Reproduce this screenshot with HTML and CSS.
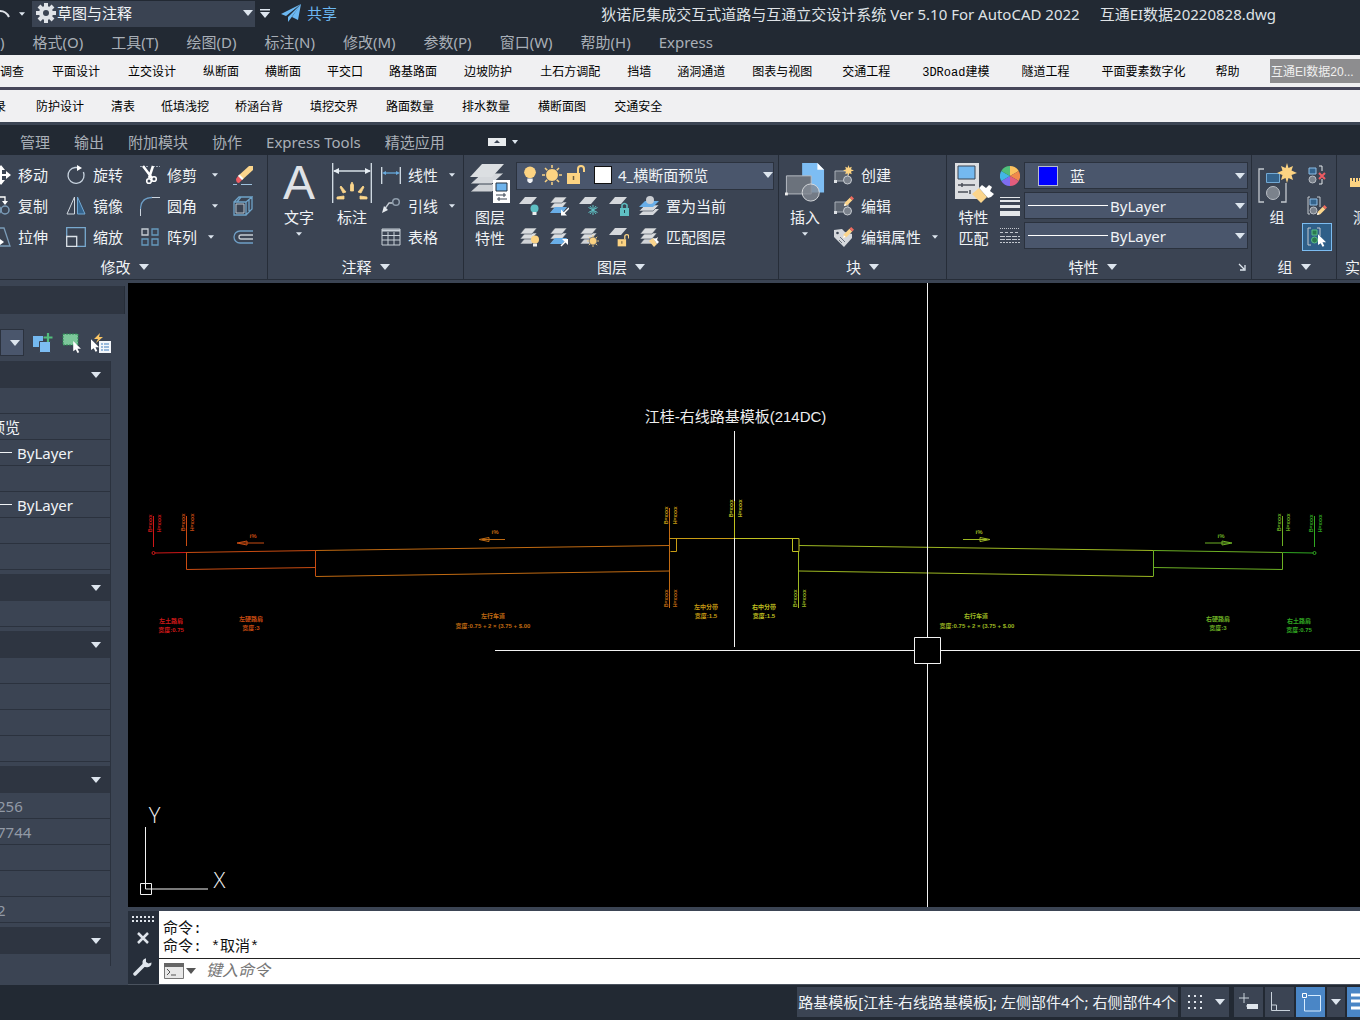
FILE: index.html
```html
<!DOCTYPE html>
<html lang="zh-CN">
<head>
  <meta charset="UTF-8" />
  <meta name="viewport" content="width=device-width, initial-scale=1.0" />
  <title>互通EI数据20220828.dwg</title>
  <link rel="stylesheet" href="styles.css">
</head>
<body>
  <!-- icon sprite -->
  <svg class="sprite" aria-hidden="true">
    <symbol id="caret" viewBox="0 0 10 6"><path d="M0 0h10L5 6z" fill="#dde5ee"/></symbol>
    <symbol id="gear" viewBox="0 0 20 20"><g stroke="#dfe3e8" stroke-width="4"><path d="M10 0v20M0 10h20M3 3l14 14M17 3L3 17"/></g><circle cx="10" cy="10" r="7" fill="#dfe3e8"/><circle cx="10" cy="10" r="3" fill="#3b4453"/></symbol>
    <symbol id="plane" viewBox="0 0 20 20"><path d="M20 1L0 11l5 2zM20 1L7 14v5l3-4zM20 1l-9 13 6 3z" fill="#6cb8f2"/></symbol>
    <symbol id="move" viewBox="0 0 20 20"><path d="M10 1v18M1 10h18" stroke="#fff" stroke-width="2"/><path d="M10 0l4 5H6zM10 20l4-5H6zM0 10l5-4v8zM20 10l-5-4v8z" fill="#fff"/></symbol>
    <symbol id="rotate" viewBox="0 0 20 20"><path d="M12 2.500H9A8 8 0 1 0 18 10c0-1-.3-2-.6-3" fill="none" stroke="#c7d2de" stroke-width="1.300"/><path d="M11 0l5 3-5 3z" fill="#fff"/></symbol>
    <symbol id="trim" viewBox="0 0 20 20"><path d="M0 1.500h8M13 1.500h7" stroke="#9ba5b3" stroke-dasharray="2 1"/><path d="M3 1l9 12M13 1l-4 12" stroke="#fff" stroke-width="2.500"/><g fill="none" stroke="#fff" stroke-width="1.600"><circle cx="9" cy="16" r="2.300"/><circle cx="14" cy="14" r="2.300"/></g></symbol>
    <symbol id="eraser" viewBox="0 0 20 20"><path d="M5 11L16 1h4v4L9 15z" fill="#fbd58c"/><path d="M5 11l4 4-3 3q-3 0-3-4z" fill="#ef5b62"/><path d="M5 11l4 4 1.500-1.500-4-4z" fill="#fff"/><path d="M0 19.500h4M8 19.500h11" stroke="#9fc2de"/></symbol>
    <symbol id="copy" viewBox="0 0 20 20"><path d="M8 1h6v5" fill="none" stroke="#fff" stroke-width="1.300"/><path d="M11 5h6l-3 4z" fill="#fff"/><g fill="none" stroke="#7b9cb8" stroke-width="1.500"><circle cx="6" cy="14" r="4"/><circle cx="14" cy="14" r="4"/></g></symbol>
    <symbol id="mirror" viewBox="0 0 20 20"><path d="M8.500 1v17H1z" fill="none" stroke="#d2d9e1"/><path d="M11.500 1v17H19z" fill="#34638c" stroke="#72a9d4"/></symbol>
    <symbol id="fillet" viewBox="0 0 20 20"><path d="M.5 20v-7" stroke="#cdd5de"/><path d="M.5 13Q1 1.500 12 1.500" fill="none" stroke="#6d9ec6" stroke-width="1.300"/><path d="M12 1.500h8" stroke="#cdd5de"/></symbol>
    <symbol id="cube" viewBox="0 0 20 20"><path d="M1 6h12v13H1zM1 6l5-5h13l-6 5M19 1v12l-6 6M4 6l4-5M16 4v11" fill="none" stroke="#6fa3c8" stroke-width="1.300"/><path d="M3 8h8v9H3z" fill="none" stroke="#b9c4ce"/></symbol>
    <symbol id="stretch" viewBox="0 0 20 20"><path d="M3 1h10l6 18H1z" fill="none" stroke="#7b9cb8" stroke-width="1.300"/><path d="M2 15h8" stroke="#fff"/><path d="M9 12l4 3-4 3z" fill="#fff"/></symbol>
    <symbol id="scale" viewBox="0 0 20 20"><path d="M.7 9V.7h18.600v18.600H11" fill="none" stroke="#78a9cf" stroke-width="1.300"/><path d="M.7 9.500h10v9.800H.7z" fill="none" stroke="#dbe1e8" stroke-width="1.300"/></symbol>
    <symbol id="array" viewBox="0 0 20 20"><path d="M2 2h6v6H2z" fill="none" stroke="#c5ccd4" stroke-width="1.300"/><path d="M12 2h6v6h-6zM2 12h6v6H2zM12 12h6v6h-6z" fill="none" stroke="#6699bd" stroke-width="1.300"/></symbol>
    <symbol id="offset" viewBox="0 0 20 20"><path d="M20 4H7a6 6 0 0 0 0 12h13" fill="none" stroke="#6f9fc6" stroke-width="1.300"/><path d="M20 8H8a2 2 0 0 0 0 4h12" fill="none" stroke="#c5ccd4" stroke-width="1.300"/></symbol>
    <symbol id="dim" viewBox="0 0 40 40"><path d="M.7 0v40M39.300 0v40M2 8h36" stroke="#d7e0e8" stroke-width="1.300"/><path d="M1 8l6-3v6zM39 8l-6-3v6z" fill="#e6edf3"/><path d="M18.500 28V22l1.500-3 1.500 3v6zM14 29l-5-6-1 1 3 6zM26 29l5-6 1 1-3 6zM12 33l-7 1v2h7zM28 33l7 1v2h-7z" fill="#fbd58c" stroke="#fbd58c" stroke-width=".8"/></symbol>
    <symbol id="linear" viewBox="0 0 20 20"><path d="M.7 2v17M19.300 2v17" stroke="#d7e0e8" stroke-width="1.300"/><path d="M3 8h14" stroke="#67a9dc" stroke-width="1.300"/><path d="M1 8l4-2v4zM19 8l-4-2v4z" fill="#67a9dc"/></symbol>
    <symbol id="leader" viewBox="0 0 20 20"><path d="M3 14l5-7h4" fill="none" stroke="#c4cbd3" stroke-width="1.300"/><path d="M1 17l2-7 4 4z" fill="#e5eaef"/><circle cx="15" cy="6" r="3.300" fill="none" stroke="#8f9dac" stroke-width="1.500"/></symbol>
    <symbol id="table" viewBox="0 0 20 20"><path d="M1 2h18v16H1z" fill="none" stroke="#c8d0d8"/><path d="M1 3.500h18" stroke="#c8d0d8" stroke-width="2"/><path d="M1 8.500h18M1 13h18M7 5v13M13 5v13" stroke="#c8d0d8"/></symbol>
    <symbol id="sheet" viewBox="0 0 20 12"><path d="M7 1h12l-6 7H1z" fill="#d5d8dc"/></symbol>
    <symbol id="stack" viewBox="0 0 20 18"><path d="M6 11h12l-5 6H1z" fill="#cfd2d6" stroke="#3b4453" stroke-width=".6"/><path d="M6 6h12l-5 6H1z" fill="#d9dcdf" stroke="#3b4453" stroke-width=".6"/><path d="M6 1h12l-5 6H1z" fill="#d9dcdf" stroke="#3b4453" stroke-width=".6"/></symbol>
    <symbol id="bulb" viewBox="0 0 14 20"><circle cx="7" cy="7" r="6.500" fill="#fcd382"/><path d="M4 14h6v3l-2 2H6l-2-2z" fill="#f1f3f5"/></symbol>
    <symbol id="sun" viewBox="0 0 20 20"><path d="M10 0v20M0 10h20M3 3l14 14M17 3L3 17" stroke="#fcd382" stroke-width="1.500"/><circle cx="10" cy="10" r="6.500" fill="#fcd382" stroke="#43506a"/></symbol>
    <symbol id="unlock" viewBox="0 0 20 20"><path d="M1 8h13v11H1z" fill="#fcd382"/><path d="M12 8V4a3 3 0 0 1 6 0v3" fill="none" stroke="#fcd382" stroke-width="2"/><path d="M7.500 11v4" stroke="#6e5f40" stroke-width="1.500"/></symbol>
    <symbol id="layerProps" viewBox="0 0 40 40"><path d="M12 18h22L22 29H0z" fill="#cfd2d6" stroke="#3b4453"/><path d="M12 10h22L22 21H0z" fill="#d5d8dc" stroke="#3b4453"/><path d="M12 1h22L22 14H0z" fill="#dcdfe2"/><path d="M23 17h17v23H23z" fill="#fff"/><path d="M26 20h11v8H26z" fill="#6fb4ec" stroke="#24303e"/><path d="M26 32h10M27 36h10M34 30v4M29 34v4" stroke="#3b4453"/></symbol>
    <symbol id="layOff" viewBox="0 0 20 20"><use href="#sheet" width="20" height="12" x="-1"/><circle cx="15.500" cy="12.500" r="4" fill="#5fc0c4"/><path d="M13.500 16h4v3h-4z" fill="#eee"/></symbol>
    <symbol id="layPrev" viewBox="0 0 20 20"><use href="#stack" width="20" height="18"/><path d="M6 11h12l-5 6H1z" fill="#69aee8"/><path d="M20 12l-6 6" stroke="#fff" stroke-width="1.500"/><path d="M12 19.500v-6l6 6z" fill="#fff"/></symbol>
    <symbol id="layFreeze" viewBox="0 0 20 20"><use href="#sheet" width="20" height="12" x="-1"/><path d="M14 9v10M9.500 11.500l9 5M18.500 11.500l-9 5M11 10l6 8M17 10l-6 8" stroke="#5fc0c4"/></symbol>
    <symbol id="layLock" viewBox="0 0 20 20"><use href="#sheet" width="20" height="12" x="-1"/><path d="M11 12h9v8h-9z" fill="#5fc0c4"/><path d="M13 12V9q2.500-3 5 0v3" fill="none" stroke="#5fc0c4" stroke-width="1.500"/><path d="M15.500 14v3" stroke="#24424a"/></symbol>
    <symbol id="layCur" viewBox="0 0 20 20"><path d="M6 13h14l-6 6H0z" fill="#d5d8dc"/><path d="M6 9h14l-6 6H0z" fill="#d5d8dc" stroke="#3b4453" stroke-width=".6"/><path d="M6 5h14l-6 6H0z" fill="#69aee8"/><circle cx="11" cy="4" r="4" fill="#c9cdd2"/></symbol>
    <symbol id="layOn" viewBox="0 0 20 20"><use href="#stack" width="20" height="18"/><circle cx="16" cy="12.500" r="4" fill="#fcd382"/><path d="M14 16.500h4v3h-4z" fill="#eee"/></symbol>
    <symbol id="layNext" viewBox="0 0 20 20"><use href="#stack" width="20" height="18"/><path d="M6 11h12l-5 6H1z" fill="#69aee8"/><path d="M12 19l6-6" stroke="#fff" stroke-width="1.500"/><path d="M13 12h6v6z" fill="#fff"/></symbol>
    <symbol id="layThaw" viewBox="0 0 20 20"><use href="#stack" width="20" height="18"/><use href="#sun" x="8" y="8" width="12" height="12"/></symbol>
    <symbol id="layUnlock" viewBox="0 0 20 20"><use href="#sheet" width="20" height="12" x="-1"/><use href="#unlock" x="8" y="7" width="13" height="13"/></symbol>
    <symbol id="layMatch" viewBox="0 0 20 20"><use href="#stack" width="20" height="18"/><path d="M10 14l4-3 4 6-3 3z" fill="#fbd58c"/><path d="M14 11l2 1 3-2-1 3 2 2-2 2z" fill="#fff"/></symbol>
    <symbol id="insert" viewBox="0 0 42 42"><path d="M18 0h16l7 7v24H18z" fill="#7dbdf3"/><path d="M34 0v7h7z" fill="#fff"/><path d="M1.500 13.500h26v19h-26z" fill="#6b727c" stroke="#b9bec5"/><circle cx="27" cy="31" r="9" fill="#838a93" fill-opacity=".8" stroke="#d7dadd"/><path d="M0 31h3v3H0z" fill="#eee"/></symbol>
    <symbol id="blk" viewBox="0 0 20 20"><path d="M1 6h13v10H1z" fill="#5d6570" stroke="#aab0b8"/><circle cx="13.500" cy="15" r="4" fill="#7b828c" stroke="#c5cad0"/><path d="M0 15h3v3H0z" fill="#dde1e5"/></symbol>
    <symbol id="star" viewBox="0 0 20 20"><path d="M10 0l1.500 5L16 3l-1.500 4.500L20 10l-5.500 2L16 17l-4.500-2L10 20l-1.500-5L4 17l1.500-5L0 10l5.500-2.500L4 3l4.500 2z" fill="#fcd382"/></symbol>
    <symbol id="pencil" viewBox="0 0 12 12"><path d="M0 12l1-4 6-6 3 3-6 6z" fill="#fbd58c"/><path d="M7 2l2-2 3 3-2 2z" fill="#ef6b5e"/><path d="M0 12l1-3 2 2z" fill="#fff"/></symbol>
    <symbol id="create" viewBox="0 0 20 20"><use href="#blk" width="20" height="20"/><use href="#star" x="9" y="0" width="11" height="11"/></symbol>
    <symbol id="edit" viewBox="0 0 20 20"><use href="#blk" width="20" height="20"/><use href="#pencil" x="10" y="0" width="10" height="10"/></symbol>
    <symbol id="attr" viewBox="0 0 20 20"><path d="M0 3l8-1 3 3 7 2v4l-8 9L0 10z" fill="#d5d8dc"/><circle cx="3.500" cy="6" r="1.300" fill="#3b4453"/><path d="M6 10l5 5M5 13l3 3" stroke="#6b727c"/><use href="#pencil" x="9" y="0" width="11" height="11"/></symbol>
    <symbol id="match" viewBox="0 0 40 40"><path d="M1 0h24v36H1z" fill="#dcdee1"/><path d="M4 3h17v13H4z" fill="#74b9f0" stroke="#3b4453"/><path d="M4 22h17M4 29h10M8 20v4M16 27v4" stroke="#4a4f58" stroke-width="1.500"/><path d="M18 31l7-6 8 9-6 6z" fill="#fbd58c"/><path d="M25 25l3-3 4 3 3-3 3 2-2 4 4 3-3 3-3 1z" fill="#fff"/></symbol>
    <symbol id="wheel" viewBox="0 0 20 20"><path d="M10 10V0a10 10 0 0 1 8.700 5z" fill="#fbc15e"/><path d="M10 10l8.700-5a10 10 0 0 1 0 10z" fill="#f08a4b"/><path d="M10 10l8.700 5A10 10 0 0 1 10 20z" fill="#e35d7d"/><path d="M10 10v10a10 10 0 0 1-8.700-5z" fill="#7e6df0"/><path d="M10 10l-8.700 5a10 10 0 0 1 0-10z" fill="#42b6e6"/><path d="M10 10L1.300 5A10 10 0 0 1 10 0z" fill="#4fbf7a"/></symbol>
    <symbol id="weight" viewBox="0 0 20 20"><path d="M0 1h20v1H0zM0 4h20v2H0zM0 9h20v3H0zM0 15h20v5H0z" fill="#e3e6e9"/></symbol>
    <symbol id="ltype" viewBox="0 0 20 20"><path d="M0 2.500h20" stroke="#c3c8cf" stroke-dasharray="1 1"/><path d="M0 6.500h20" stroke="#c3c8cf" stroke-dasharray="3 2"/><path d="M0 10.500h20M0 13.500h20" stroke="#c3c8cf" stroke-dasharray="5 1"/><path d="M0 16.500h20" stroke="#c3c8cf" stroke-dasharray="2 1"/></symbol>
    <symbol id="group" viewBox="0 0 40 40"><path d="M7 6H2v33h5M24 39h5V20" fill="none" stroke="#c4c9cf" stroke-width="1.300"/><path d="M9.500 10.500h13v9h-13z" fill="#34638c" stroke="#72a9d4"/><circle cx="16" cy="30" r="6.500" fill="#7b828c" stroke="#b9bec5"/><use href="#star" x="20" y="0" width="20" height="20"/></symbol>
    <symbol id="gobj" viewBox="0 0 20 20"><path d="M4 3h7v6H4z" fill="#34638c" stroke="#8cbde6"/><circle cx="7.500" cy="14.500" r="3.500" fill="#7b828c" stroke="#b9bec5"/></symbol>
    <symbol id="ungroup" viewBox="0 0 20 20"><use href="#gobj" width="20" height="20" x="-2"/><path d="M12 1h3v5M15 14v5h-3" fill="none" stroke="#e4e8ec"/><path d="M12 8l6 6M18 8l-6 6" stroke="#ef5b62" stroke-width="2"/></symbol>
    <symbol id="gedit" viewBox="0 0 20 20"><use href="#gobj" width="20" height="20" x="-1"/><path d="M3 1H1v17h2M10 1h3v10" fill="none" stroke="#c4c9cf"/><use href="#pencil" x="10" y="9" width="10" height="10"/></symbol>
    <symbol id="arrow" viewBox="0 0 10 14"><path d="M0 0v12l3-2 2 4 2-1-2-4h4z" fill="#fff"/></symbol>
    <symbol id="gsel" viewBox="0 0 20 20"><path d="M4 1H1v17h3M10 1h3v8" fill="none" stroke="#c4c9cf"/><path d="M5 3h5v5H5z" fill="#2b7a50" stroke="#58bf85"/><circle cx="7.500" cy="13" r="3" fill="#2b7a50" stroke="#58bf85"/><use href="#arrow" x="11" y="7" width="9" height="13"/></symbol>
    <symbol id="ruler" viewBox="0 0 40 40"><path d="M0 15h40v9H0z" fill="#fcd382"/><path d="M2.500 15v3M5.500 15v4M8.500 15v3" stroke="#3b4453"/></symbol>
    <symbol id="pickAdd" viewBox="0 0 20 20"><path d="M0 3h10v11H0z" fill="#74b9f0"/><path d="M6.500 8.500h11v11h-11z" fill="#7dbdf3" stroke="#3b4453"/><path d="M15 0v9M10.500 4.500h9" stroke="#52bd7c" stroke-width="2.200"/></symbol>
    <symbol id="selObj" viewBox="0 0 20 20"><path d="M1 1h15v11H1z" fill="#7cc79a" stroke="#2d8a55" stroke-dasharray="2 1"/><use href="#arrow" x="11" y="8" width="9" height="12"/></symbol>
    <symbol id="quick" viewBox="0 0 20 20"><path d="M9 0L3 6h4l-2 4 7-6H8z" fill="#fcc765"/><use href="#arrow" x="0" y="6" width="9" height="13"/><path d="M8 8h12v12H8z" fill="#f3f6fa"/><path d="M10 11h2M10 14h2M10 17h2M13 11h5M13 14h5M13 17h5" stroke="#3f7fc0"/></symbol>
    <symbol id="wrench" viewBox="0 0 20 20"><path d="M2 18l9-9" stroke="#dfe5ec" stroke-width="3.500" stroke-linecap="round"/><path d="M18.500 6.500A4.500 4.500 0 1 1 13 2.300l0 3.700 2.500 1.500z" fill="#dfe5ec"/></symbol>
  </svg>

  <header class="titlebar">
    <svg class="undo-cut" viewBox="0 0 10 10"><path d="M0 2q6 0 9 6" fill="none" stroke="#dfe3e8" stroke-width="2"/></svg>
    <svg class="caret-sm"><use href="#caret"/></svg>
    <label class="workspace">
      <svg class="icon"><use href="#gear"/></svg>
      <select aria-label="工作空间"><option>草图与注释</option></select>
      <svg class="caret"><use href="#caret"/></svg>
    </label>
    <svg class="more" viewBox="0 0 10 9"><path d="M0 0h10v1.500H0zM0 3h10L5 9z" fill="#dde5ee"/></svg>
    <button class="share"><svg class="icon"><use href="#plane"/></svg>共享</button>
    <div class="doc-title"><span>狄诺尼集成交互式道路与互通立交设计系统 Ver 5.10 For AutoCAD 2022</span><span>互通EI数据20220828.dwg</span></div>
  </header>

  <nav class="menubar">
    <button>)</button><button>格式(O)</button><button>工具(T)</button><button>绘图(D)</button><button>标注(N)</button><button>修改(M)</button><button>参数(P)</button><button>窗口(W)</button><button>帮助(H)</button><button>Express</button>
  </nav>

  <nav class="plugin-bar">
    <button class="first">调查</button><button>平面设计</button><button>立交设计</button><button class="short">纵断面</button><button class="short">横断面</button><button class="short">平交口</button><button class="short">路基路面</button><button>边坡防护</button><button>土石方调配</button><button class="short">挡墙</button><button class="short">涵洞通道</button><button>图表与视图</button><button class="long">交通工程</button><button class="long">3DRoad建模</button><button class="long">隧道工程</button><button class="long">平面要素数字化</button><button>帮助</button>
    <input class="doc-box" type="text" value="互通EI数据20..." aria-label="当前数据" readonly>
  </nav>
  <nav class="plugin-bar second">
    <button class="first">录</button><button class="after-cut">防护设计</button><button class="short">清表</button><button class="short">低填浅挖</button><button class="short">桥涵台背</button><button>填挖交界</button><button>路面数量</button><button>排水数量</button><button>横断面图</button><button>交通安全</button>
  </nav>

  <nav class="tabs">
    <button>管理</button><button>输出</button><button>附加模块</button><button>协作</button><button>Express Tools</button><button>精选应用</button>
    <button class="minimize" aria-label="最小化"><svg viewBox="0 0 30 10"><path d="M0 1h18v8H0z" fill="#e8ebee"/><path d="M6 6h6L9 3z" fill="#3b4453"/><path d="M24 3h6l-3 4z" fill="#dde5ee"/></svg></button>
  </nav>

  <section class="ribbon">
    <div class="panel modify">
      <div class="panel-body">
        <div class="tools cut">
          <button><svg class="icon"><use href="#move"/></svg>移动</button>
          <button><svg class="icon"><use href="#copy"/></svg>复制</button>
          <button><svg class="icon"><use href="#stretch"/></svg>拉伸</button>
        </div>
        <div class="tools">
          <button><svg class="icon"><use href="#rotate"/></svg>旋转</button>
          <button><svg class="icon"><use href="#mirror"/></svg>镜像</button>
          <button><svg class="icon"><use href="#scale"/></svg>缩放</button>
        </div>
        <div class="tools drop">
          <button><svg class="icon"><use href="#trim"/></svg>修剪<svg class="caret-sm"><use href="#caret"/></svg></button>
          <button><svg class="icon"><use href="#fillet"/></svg>圆角<svg class="caret-sm"><use href="#caret"/></svg></button>
          <button class="near"><svg class="icon"><use href="#array"/></svg>阵列<svg class="caret-sm"><use href="#caret"/></svg></button>
        </div>
        <div class="tools icons-only">
          <button aria-label="删除"><svg class="icon"><use href="#eraser"/></svg></button>
          <button aria-label="分解"><svg class="icon"><use href="#cube"/></svg></button>
          <button aria-label="偏移"><svg class="icon"><use href="#offset"/></svg></button>
        </div>
      </div>
      <button class="panel-title">修改<svg class="caret"><use href="#caret"/></svg></button>
    </div>

    <div class="panel annotate">
      <div class="panel-body">
        <button class="big"><span class="icon letter">A</span>文字<svg class="caret-sm"><use href="#caret"/></svg></button>
        <button class="big"><svg class="icon"><use href="#dim"/></svg>标注</button>
        <div class="tools drop">
          <button><svg class="icon"><use href="#linear"/></svg>线性<svg class="caret-sm"><use href="#caret"/></svg></button>
          <button><svg class="icon"><use href="#leader"/></svg>引线<svg class="caret-sm"><use href="#caret"/></svg></button>
          <button><svg class="icon"><use href="#table"/></svg>表格</button>
        </div>
      </div>
      <button class="panel-title">注释<svg class="caret"><use href="#caret"/></svg></button>
    </div>

    <div class="panel layers">
      <div class="panel-body">
        <button class="big"><svg class="icon"><use href="#layerProps"/></svg>图层<br>特性</button>
        <div class="layer-tools">
          <label class="field layer-field">
            <svg class="bulb"><use href="#bulb"/></svg>
            <svg class="icon"><use href="#sun"/></svg>
            <svg class="icon"><use href="#unlock"/></svg>
            <span class="swatch white"></span>
            <select aria-label="图层"><option>4_横断面预览</option></select>
            <svg class="caret"><use href="#caret"/></svg>
          </label>
          <div class="icon-row">
            <button aria-label="关闭图层"><svg class="icon"><use href="#layOff"/></svg></button>
            <button aria-label="隔离"><svg class="icon"><use href="#layPrev"/></svg></button>
            <button aria-label="冻结"><svg class="icon"><use href="#layFreeze"/></svg></button>
            <button aria-label="锁定"><svg class="icon"><use href="#layLock"/></svg></button>
            <button><svg class="icon"><use href="#layCur"/></svg>置为当前</button>
          </div>
          <div class="icon-row">
            <button aria-label="打开所有图层"><svg class="icon"><use href="#layOn"/></svg></button>
            <button aria-label="取消隔离"><svg class="icon"><use href="#layNext"/></svg></button>
            <button aria-label="解冻"><svg class="icon"><use href="#layThaw"/></svg></button>
            <button aria-label="解锁"><svg class="icon"><use href="#layUnlock"/></svg></button>
            <button><svg class="icon"><use href="#layMatch"/></svg>匹配图层</button>
          </div>
        </div>
      </div>
      <button class="panel-title">图层<svg class="caret"><use href="#caret"/></svg></button>
    </div>

    <div class="panel block">
      <div class="panel-body">
        <button class="big"><svg class="icon"><use href="#insert"/></svg>插入<svg class="caret-sm"><use href="#caret"/></svg></button>
        <div class="tools">
          <button><svg class="icon"><use href="#create"/></svg>创建</button>
          <button><svg class="icon"><use href="#edit"/></svg>编辑</button>
          <button><svg class="icon"><use href="#attr"/></svg>编辑属性<svg class="caret-sm"><use href="#caret"/></svg></button>
        </div>
      </div>
      <button class="panel-title">块<svg class="caret"><use href="#caret"/></svg></button>
    </div>

    <div class="panel props">
      <div class="panel-body">
        <button class="big"><svg class="icon"><use href="#match"/></svg>特性<br>匹配</button>
        <div class="prop-fields">
          <svg class="icon"><use href="#wheel"/></svg>
          <label class="field"><span class="swatch blue"></span><select aria-label="颜色"><option>蓝</option></select><svg class="caret"><use href="#caret"/></svg></label>
          <svg class="icon"><use href="#weight"/></svg>
          <label class="field"><span class="line"></span><select aria-label="线宽"><option>ByLayer</option></select><svg class="caret"><use href="#caret"/></svg></label>
          <svg class="icon"><use href="#ltype"/></svg>
          <label class="field"><span class="line"></span><select aria-label="线型"><option>ByLayer</option></select><svg class="caret"><use href="#caret"/></svg></label>
        </div>
      </div>
      <div class="title-row">
        <button class="panel-title">特性<svg class="caret"><use href="#caret"/></svg></button>
        <button class="launcher" aria-label="特性选项板"><svg viewBox="0 0 8 8"><path d="M1 1l5 5M7 2v5H2" fill="none" stroke="#dde5ee" stroke-width="1.300"/></svg></button>
      </div>
    </div>

    <div class="panel groups">
      <div class="panel-body">
        <button class="big"><svg class="icon"><use href="#group"/></svg>组</button>
        <div class="tools">
          <button aria-label="解除编组"><svg class="icon"><use href="#ungroup"/></svg></button>
          <button aria-label="组编辑"><svg class="icon"><use href="#gedit"/></svg></button>
          <button class="on" aria-label="启用组选择"><svg class="icon"><use href="#gsel"/></svg></button>
        </div>
      </div>
      <button class="panel-title">组<svg class="caret"><use href="#caret"/></svg></button>
    </div>

    <div class="panel utils">
      <div class="panel-body">
        <button class="big"><svg class="icon"><use href="#ruler"/></svg><span>测</span></button>
      </div>
      <button class="panel-title">实</button>
    </div>
  </section>

  <main class="workarea">
    <aside class="palette">
      <div class="palette-tab"></div>
      <div class="palette-tools">
        <label class="field"><select aria-label="对象"><option></option></select><svg class="caret"><use href="#caret"/></svg></label>
        <button aria-label="切换选择"><svg class="icon"><use href="#pickAdd"/></svg></button>
        <button aria-label="选择对象"><svg class="icon"><use href="#selObj"/></svg></button>
        <button aria-label="快速选择"><svg class="icon"><use href="#quick"/></svg></button>
      </div>
      <div class="palette-list">
        <section>
          <button class="head" aria-label="常规"><svg class="caret"><use href="#caret"/></svg></button>
          <div class="prop"></div>
          <div class="prop"><span class="clip">预览</span></div>
          <div class="prop"><span class="dash"></span>ByLayer</div>
          <div class="prop"></div>
          <div class="prop"><span class="dash"></span>ByLayer</div>
          <div class="prop"></div>
          <div class="prop"></div>
        </section>
        <section>
          <button class="head" aria-label="三维效果"><svg class="caret"><use href="#caret"/></svg></button>
          <div class="prop"></div>
        </section>
        <section>
          <button class="head" aria-label="打印样式"><svg class="caret"><use href="#caret"/></svg></button>
          <div class="prop"></div><div class="prop"></div><div class="prop"></div><div class="prop"></div>
        </section>
        <section>
          <button class="head" aria-label="视图"><svg class="caret"><use href="#caret"/></svg></button>
          <div class="prop dim">256</div>
          <div class="prop dim">7744</div>
          <div class="prop"></div>
          <div class="prop"></div>
          <div class="prop dim">2</div>
        </section>
        <section>
          <button class="head" aria-label="其他"><svg class="caret"><use href="#caret"/></svg></button>
        </section>
      </div>
    </aside>

    <div class="stage">
      <!-- road template drawing -->
      <svg class="drawing" viewBox="128 283 1232 624" preserveAspectRatio="xMinYMin slice">
        <text class="cad-title" x="735.500" y="422">江桂-右线路基模板(214DC)</text>
        <path class="white" d="M734.500 431v216"/>

        <g class="c1">
          <circle cx="153.500" cy="553" r="1.500"/>
          <path d="M153.500 516v31M155 553l31-.5"/>
          <text transform="translate(152 532) rotate(-90)">B=xxxx</text>
          <text transform="translate(161 532) rotate(-90)">H=xxxx</text>
          <text class="mid" x="171" y="623">左土路肩</text>
          <text class="mid" x="171" y="632">宽度:0.75</text>
        </g>
        <g class="c2">
          <path d="M186.500 516v30M186.500 552v17.500L315 567.500M186 552.500L315.500 550.500V576"/>
          <path d="M240 543h24"/>
          <path d="M237 543l10-2v4z"/>
          <text transform="translate(185 531) rotate(-90)">B=xxxx</text>
          <text transform="translate(194 531) rotate(-90)">H=xxxx</text>
          <text class="mid" x="253" y="538">i%</text>
          <text class="mid" x="251" y="621">左硬路肩</text>
          <text class="mid" x="251" y="630">宽度:3</text>
        </g>
        <g class="c3">
          <path d="M315.500 550.500L669.500 545.500M315.500 576.500L669.500 571"/>
          <path d="M482 539.500h23M479 539.500l10-2v4z"/>
          <text class="mid" x="495" y="534">i%</text>
          <text class="mid" x="493" y="618">左行车道</text>
          <text class="mid" x="493" y="628">宽度:0.75 + 2 × (3.75 + $.00</text>
          <path d="M669.500 508v100"/>
          <text transform="translate(668 607) rotate(-90)">B=xxxx</text>
          <text transform="translate(677 607) rotate(-90)">H=xxxx</text>
        </g>
        <g class="c4">
          <path d="M669.500 538.500H734M676.500 538.500v13h-6"/>
          <text transform="translate(668 524) rotate(-90)">B=xxxx</text>
          <text transform="translate(677 524) rotate(-90)">H=xxxx</text>
          <text class="mid" x="706" y="609">左中分带</text>
          <text class="mid" x="706" y="618">宽度:1.5</text>
        </g>
        <g class="c5">
          <path d="M734.500 501v37M735 538.500h64v13h-6.500v-13"/>
          <text transform="translate(733 517) rotate(-90)">B=xxxx</text>
          <text transform="translate(742 517) rotate(-90)">H=xxxx</text>
          <text class="mid" x="764" y="609">右中分带</text>
          <text class="mid" x="764" y="618">宽度:1.5</text>
        </g>
        <g class="c6">
          <path d="M798.500 552v56M799 545.500L1153.500 550.500M799 571L1153.500 576.500"/>
          <path d="M963 539.500h24M990 539.500l-10-2v4z"/>
          <text transform="translate(797 607) rotate(-90)">B=xxxx</text>
          <text transform="translate(806 607) rotate(-90)">H=xxxx</text>
          <text class="mid" x="979" y="534">i%</text>
          <text class="mid" x="976" y="618">右行车道</text>
          <text class="mid" x="977" y="628">宽度:0.75 + 2 × (3.75 + $.00</text>
        </g>
        <g class="c7">
          <path d="M1153.500 576V550.500L1282.500 552.500V569.500L1153.500 567.500M1282.500 516v30"/>
          <path d="M1205 543h24M1232 543l-10-2v4z"/>
          <text transform="translate(1281 531) rotate(-90)">B=xxxx</text>
          <text transform="translate(1290 531) rotate(-90)">H=xxxx</text>
          <text class="mid" x="1221" y="538">i%</text>
          <text class="mid" x="1218" y="621">右硬路肩</text>
          <text class="mid" x="1218" y="630">宽度:3</text>
        </g>
        <g class="c8">
          <circle cx="1314.500" cy="553" r="1.500"/>
          <path d="M1314.500 516v31M1283 552.500l30 .5"/>
          <text transform="translate(1313 532) rotate(-90)">B=xxxx</text>
          <text transform="translate(1322 532) rotate(-90)">H=xxxx</text>
          <text class="mid" x="1299" y="623">右土路肩</text>
          <text class="mid" x="1299" y="632">宽度:0.75</text>
        </g>

        <!-- crosshair -->
        <path class="white" d="M927.500 283v354M927.500 664v243M495 650.500h419M941 650.500h419M914.500 637.500h26v26h-26z"/>

        <!-- UCS icon -->
        <path class="white" d="M145.500 827v62H208M140.500 883.500h11v11h-11z"/>
        <text class="axis" x="154.500" y="823">Y</text>
        <text class="axis" x="219.500" y="888">X</text>
      </svg>

      <div class="command">
        <div class="command-side">
          <svg class="grip" viewBox="0 0 22 6"><path d="M0 1h22M0 5h22" stroke="#dfe5ec" stroke-width="2" stroke-dasharray="2 2"/></svg>
          <button aria-label="关闭"><svg viewBox="0 0 12 12"><path d="M1 1l10 10M11 1L1 11" stroke="#dfe5ec" stroke-width="2.500"/></svg></button>
          <button class="wrench" aria-label="自定义"><svg><use href="#wrench"/></svg></button>
        </div>
        <div class="command-main">
          <div class="history">命令:<br>命令: *取消*</div>
          <div class="prompt">
            <svg class="term" viewBox="0 0 20 16"><path d="M.5.500h19v15H.5z" fill="#e8e8e8" stroke="#777"/><path d="M0 0h20v4H0z" fill="#666"/><path d="M3 6l3 3-3 3M7 12h5" fill="none" stroke="#555"/></svg>
            <svg class="term-caret" viewBox="0 0 10 6"><path d="M0 0h10L5 6z" fill="#555"/></svg>
            <input type="text" placeholder="键入命令" aria-label="键入命令">
          </div>
        </div>
      </div>
    </div>
  </main>

  <footer class="statusbar">
    <span class="message">路基模板[江桂-右线路基模板]; 左侧部件4个; 右侧部件4个</span>
    <button class="grid-btn" aria-label="捕捉模式"><svg class="icon" viewBox="0 0 20 20"><path d="M3 4h14M3 10h14M3 16h14" stroke="#dfe5ec" stroke-width="2" stroke-dasharray="2 4"/></svg><svg class="caret"><use href="#caret"/></svg></button>
    <button aria-label="动态输入"><svg class="icon" viewBox="0 0 20 20"><path d="M5 1v10M0 6h10M7 14h12" stroke="#c9d2db"/><path d="M8 12h11v5H8z" fill="#dfe5ec"/></svg></button>
    <button aria-label="正交"><svg class="icon" viewBox="0 0 20 20"><path d="M1.500 0v18.500H20M1.500 13h5v5.500" fill="none" stroke="#c9d2db"/></svg></button>
    <button class="active" aria-label="对象捕捉"><svg class="icon" viewBox="0 0 20 20"><path d="M3.500 7v12h16V3.500H7" fill="none" stroke="#d6ecff"/><path d="M1.500 1.500h4v4h-4z" fill="none" stroke="#fff"/></svg></button>
    <button class="only-caret" aria-label="对象捕捉设置"><svg class="caret"><use href="#caret"/></svg></button>
    <button class="active last" aria-label="线宽"><svg class="icon" viewBox="0 0 20 20"><path d="M0 3h20M0 9h20M0 16h20" stroke="#fff" stroke-width="3"/></svg></button>
  </footer>
</body>
</html>
```

FILE: styles.css
```css
* {
  box-sizing: border-box;
}
body {
  margin: 0;
  height: 100vh;
  display: flex;
  flex-direction: column;
  overflow: hidden;
  background: #222933;
  color: #f0f3f6;
  font-family: "Noto Sans", "Noto Sans CJK SC", sans-serif;
  font-size: 15px;
  line-height: 20px;
}
button, select, input {
  font: inherit;
  color: inherit;
  background: none;
  border: none;
  padding: 0;
  margin: 0;
  white-space: nowrap;
}
select {
  appearance: none;
  flex: 1;
  min-width: 0;
}
svg {
  display: block;
  flex: none;
}
.sprite {
  position: absolute;
  width: 0;
  height: 0;
}
.icon {
  width: 20px;
  height: 20px;
}
.caret {
  width: 10px;
  height: 6px;
}
.caret-sm {
  width: 6px;
  height: 4px;
}

/* title bar */
.titlebar {
  flex: none;
  display: flex;
  align-items: center;
  height: 27px;
}
.undo-cut {
  width: 10px;
  height: 10px;
  margin-right: 9px;
}
.workspace {
  display: flex;
  align-items: center;
  width: 223px;
  height: 26px;
  margin: 0 5px 0 7px;
  padding: 0 2px 2px 4px;
  gap: 1px;
  background: #3a4352;
}
.more {
  width: 10px;
  height: 9px;
  margin-right: 11px;
}
.share {
  display: flex;
  align-items: center;
  gap: 6px;
  padding-bottom: 2px;
  color: #6cb8f2;
}
.doc-title {
  display: flex;
  gap: 20px;
  margin-left: auto;
  padding: 0 84px 0 0;
  color: #dfe2e6;
  white-space: nowrap;
}
.menubar {
  flex: none;
  display: flex;
  gap: 28px;
  height: 28px;
  padding-top: 2px;
  color: #a9afb7;
}

/* road design toolbars */
.plugin-bar {
  flex: none;
  display: flex;
  align-items: center;
  height: 35px;
  background: #f0f0f2;
  border-bottom: 3px solid #464659;
  color: #000;
  font-family: "Liberation Mono", "Noto Sans CJK SC", monospace;
  font-size: 12px;
}
.plugin-bar.second {
  border-color: #3b4453;
}
.plugin-bar button {
  padding: 4px 14px 0;
}
.plugin-bar .short {
  padding: 4px 13px 0;
}
.plugin-bar .long {
  padding: 4px 16px 0;
}
.plugin-bar .first {
  padding-left: 0;
}
.second .first {
  display: flex;
  justify-content: flex-end;
  width: 6px;
  padding-right: 0;
  overflow: hidden;
}
.second .after-cut {
  padding-left: 30px;
}
.plugin-bar .doc-box {
  flex: none;
  width: 90px;
  height: 24px;
  margin-left: auto;
  padding: 0 0 2px 1px;
  background: #8d8d8f;
  color: #f0f0f0;
  font-family: "Liberation Sans", "Noto Sans CJK SC", sans-serif;
}

/* ribbon */
.tabs {
  flex: none;
  display: flex;
  align-items: center;
  gap: 24px;
  height: 30px;
  padding: 4px 0 0 20px;
  color: #a9afb7;
}
.minimize {
  margin-left: 19px;
}
.minimize svg {
  width: 30px;
  height: 10px;
}
.ribbon {
  flex: none;
  display: flex;
  height: 128px;
  background: #3b4453;
  border-bottom: 3px solid #3b4453;
}
.panel {
  flex: none;
  display: flex;
  flex-direction: column;
  padding-top: 4px;
  border-right: 1px solid #262d38;
  border-bottom: 1px solid #262d38;
}
.panel-body {
  flex: none;
  display: flex;
  height: 95px;
}
.panel-title {
  display: flex;
  align-items: center;
  justify-content: center;
  gap: 8px;
  height: 25px;
}
.tools {
  flex: none;
  display: flex;
  flex-direction: column;
}
.tools button {
  display: flex;
  align-items: center;
  gap: 7px;
  height: 31px;
}
.tools .caret-sm {
  margin-left: 4px;
}
.big {
  flex: none;
  display: flex;
  flex-direction: column;
  align-items: center;
  line-height: 21px;
}
.big .icon {
  width: 40px;
  height: 40px;
  margin: 4px 0 4px;
}
.big .caret-sm {
  margin-top: 4px;
}
.modify {
  width: 268px;
}
.modify .panel-title {
  padding-right: 18px;
}
.modify .tools {
  width: 74px;
}
.modify .drop {
  width: 93px;
}
.modify .cut {
  width: 66px;
}
.modify .icons-only {
  width: 22px;
}
.modify .caret-sm {
  margin-left: 8px;
}
.modify .near .caret-sm {
  margin-left: 4px;
}
.cut .icon {
  margin-left: -9px;
}
.annotate {
  width: 196px;
}
.annotate .big {
  width: 48px;
  margin-left: 7px;
}
.annotate .big + .big {
  width: 44px;
  margin: 0 7px 0 7px;
}
.letter {
  color: #dfe2e6;
  font-family: "Liberation Sans", sans-serif;
  font-size: 48px;
  line-height: 40px;
}
.layers {
  width: 315px;
}
.layers .big {
  width: 52px;
}
.layer-tools {
  flex: 1;
  padding: 3px 4px 0 0;
}
.field {
  display: flex;
  align-items: center;
  height: 27px;
  padding-right: 2px;
  background: #4a566c;
  border: 1px solid #2b323e;
}
.layer-field {
  height: 28px;
  padding: 0 0 2px 5px;
  gap: 4px;
}
.bulb {
  width: 16px;
  height: 18px;
}
.swatch {
  width: 18px;
  height: 18px;
  border: 1px solid #111;
  background: #fff;
}
.layer-field .swatch {
  margin: 0 2px 0 4px;
}
.icon-row {
  display: flex;
  gap: 10px;
  height: 31px;
  padding-left: 3px;
}
.icon-row button {
  display: flex;
  align-items: center;
  gap: 7px;
}
.block {
  width: 168px;
}
.block .big {
  width: 52px;
  margin-right: 3px;
}
.props {
  width: 305px;
}
.props .big {
  width: 53px;
}
.prop-fields {
  flex: 1;
  display: grid;
  grid-template-columns: 20px 1fr;
  grid-auto-rows: 27px;
  align-items: center;
  gap: 3px 4px;
  padding: 3px 3px 0 0;
}
.swatch.blue {
  width: 20px;
  height: 20px;
  margin: 0 12px 0 13px;
  background: #00f;
  border-color: #b7bcd0;
}
.line {
  width: 80px;
  height: 1px;
  margin: 0 2px 0 3px;
  background: #fff;
}
.title-row {
  display: flex;
}
.title-row .panel-title {
  flex: 1;
}
.launcher {
  padding-right: 5px;
}
.launcher svg {
  width: 8px;
  height: 8px;
}
.groups {
  width: 85px;
}
.groups .big {
  width: 50px;
}
.groups .tools button {
  width: 30px;
  justify-content: center;
}
.groups .tools .on {
  height: 28px;
  margin-top: 2px;
  background: #2f5f88;
  border: 1px solid #7cbcf0;
}
.utils {
  flex: 1;
  overflow: hidden;
  border-right: none;
}
.utils .big {
  align-items: flex-start;
  margin-left: 13px;
}
.utils .big span {
  padding-left: 3px;
}
.utils .panel-title {
  justify-content: flex-start;
  padding-left: 8px;
}

/* properties palette */
.workarea {
  flex: 1;
  display: flex;
  min-height: 0;
  background: #3b4453;
}
.palette {
  flex: none;
  width: 128px;
  padding-top: 3px;
}
.palette-tab {
  height: 28px;
  margin-right: 3px;
  background: #2e3541;
  border-right: 1px solid #262d38;
}
.palette-tools {
  display: flex;
  align-items: center;
  height: 47px;
  padding-top: 10px;
  gap: 9px;
}
.palette-tools .field {
  width: 24px;
  padding-right: 3px;
}
.palette-list {
  width: 111px;
  height: 605px;
  border-right: 1px solid #2b323e;
  overflow: hidden;
}
.palette-list section {
  margin-bottom: 4px;
}
.head {
  display: flex;
  align-items: center;
  justify-content: flex-end;
  width: 100%;
  height: 27px;
  padding-right: 9px;
  background: #2e3541;
}
.prop {
  display: flex;
  align-items: center;
  height: 26px;
  gap: 5px;
  border-bottom: 1px solid #2b323e;
  white-space: nowrap;
}
.clip {
  display: flex;
  justify-content: flex-end;
  width: 20px;
  overflow: hidden;
}
.dash {
  width: 12px;
  height: 1px;
  background: #f0f3f6;
}
.dim {
  color: #929aa6;
  text-indent: -3px;
}

/* drawing area */
.stage {
  flex: 1;
  display: flex;
  flex-direction: column;
  min-width: 0;
}
.drawing {
  flex: 1;
  width: 100%;
  min-height: 0;
  background: #000;
}
.drawing path, .drawing circle {
  fill: none;
  stroke: currentColor;
}
.drawing text {
  fill: currentColor;
  font-family: "Liberation Sans", "Noto Sans CJK SC", sans-serif;
  font-size: 5px;
  font-weight: bold;
}
.drawing .mid {
  font-size: 6px;
  text-anchor: middle;
}
.drawing .cad-title {
  fill: #eee;
  font-size: 15px;
  font-weight: normal;
  text-anchor: middle;
}
.drawing .axis {
  fill: #f2f2f2;
  font-family: "Open Sans", sans-serif;
  font-size: 22px;
  font-weight: 300;
  text-anchor: middle;
}
.drawing .white {
  stroke: #f2f2f2;
}
.c1 { color: #d01818; }
.c2 { color: #c94c12; }
.c3 { color: #c06a12; }
.c4 { color: #c89c14; }
.c5 { color: #c0c020; }
.c6 { color: #9db822; }
.c7 { color: #6cb024; }
.c8 { color: #30a822; }

/* command line */
.command {
  flex: none;
  display: flex;
  height: 78px;
  padding-top: 4px;
  border-bottom: 1px solid #4a525e;
}
.command-side {
  display: flex;
  flex-direction: column;
  align-items: center;
  width: 31px;
  padding: 5px 2px 0 0;
  background: #262e3a;
}
.grip {
  width: 22px;
  height: 6px;
}
.command-side button {
  margin-top: 10px;
}
.command-side button svg {
  width: 12px;
  height: 12px;
}
.command-side .wrench {
  margin-top: 12px;
}
.command-side .wrench svg {
  width: 20px;
  height: 20px;
}
.command-main {
  flex: 1;
  background: #fff;
  color: #111;
}
.history {
  height: 48px;
  padding: 10px 4px 0;
  border-bottom: 1px solid #222;
  font-family: "Liberation Mono", "Noto Sans CJK SC", monospace;
  line-height: 18px;
}
.prompt {
  display: flex;
  align-items: center;
  height: 24px;
  padding-left: 5px;
}
.term {
  width: 20px;
  height: 16px;
}
.term-caret {
  width: 10px;
  height: 6px;
  margin: 0 10px 0 2px;
}
.prompt input {
  flex: 1;
  height: 24px;
  padding-bottom: 3px;
  font-size: 16px;
  font-style: italic;
  outline: none;
}
.prompt input::placeholder {
  color: #777;
}

/* status bar */
.statusbar {
  flex: none;
  display: flex;
  align-items: stretch;
  justify-content: flex-end;
  height: 35px;
  padding: 2px 0 3px;
  gap: 2px;
  background: #222933;
}
.statusbar button, .message {
  display: flex;
  align-items: center;
  justify-content: center;
  background: #3b4453;
}
.message {
  padding: 0 2px 0 1px;
  margin-right: 1px;
  white-space: nowrap;
}
.statusbar button {
  width: 29px;
}
.statusbar .grid-btn {
  width: 48px;
  gap: 10px;
  margin-right: 3px;
}
.statusbar .active {
  background: #4a86c6;
}
.statusbar .only-caret {
  width: 18px;
}
.statusbar .last {
  width: 13px;
  justify-content: flex-start;
  padding-left: 4px;
  overflow: hidden;
}
```
